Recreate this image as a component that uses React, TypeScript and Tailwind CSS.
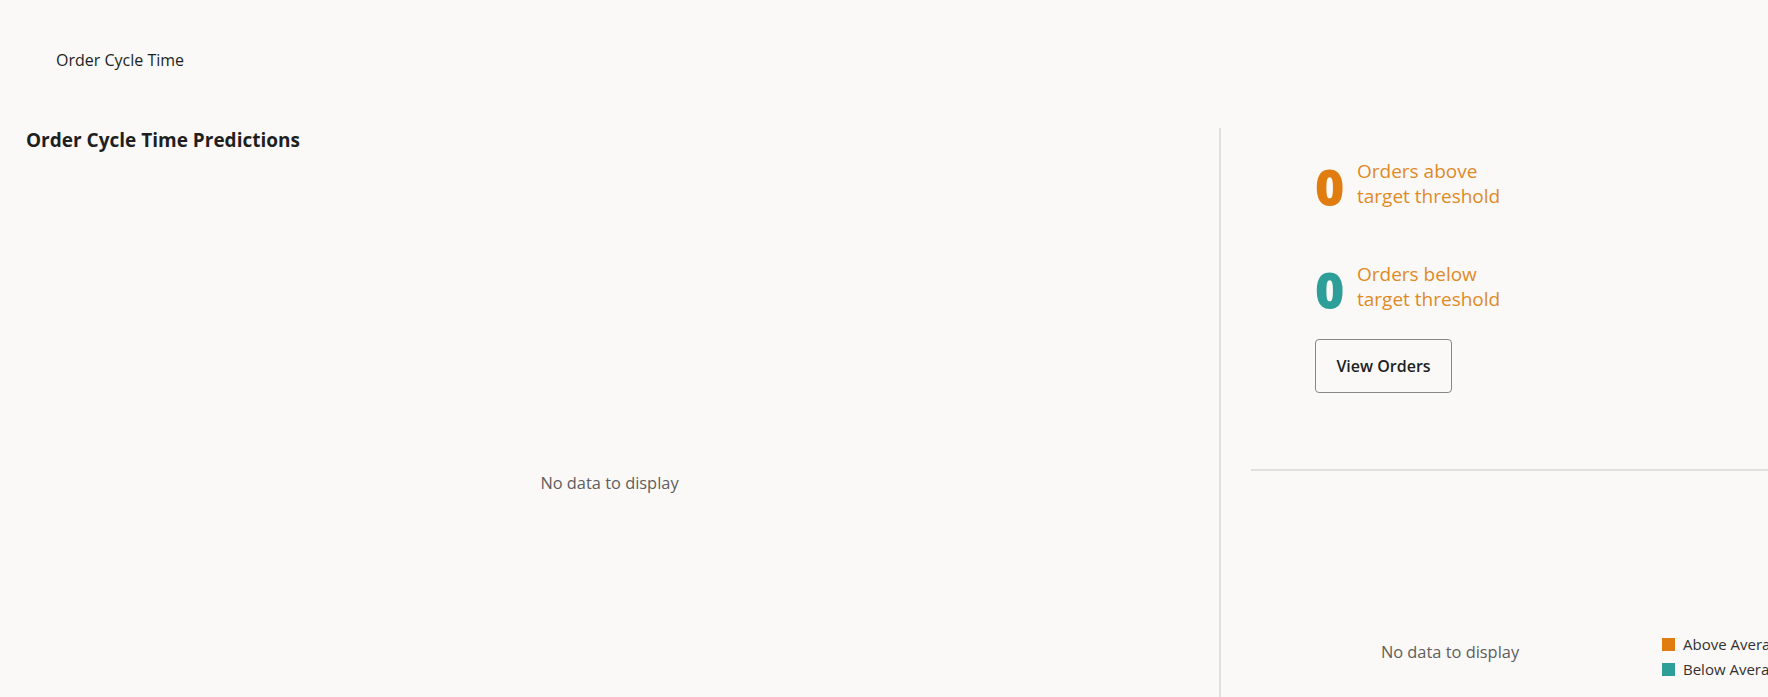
import React from "react";

export default function App() {
  const font = { fontFamily: '"Open Sans", "Noto Sans", sans-serif' };
  return (
    <div className="w-full h-[697px] bg-[#faf9f8] overflow-hidden text-[#201f1e]" style={font}>
      <div className="h-[128px] pl-[56px] pt-[49px]">
        <div className="text-[16px] leading-[22px]">Order Cycle Time</div>
      </div>
      <div className="flex h-[569px]">
        <div className="w-[1219px] shrink-0 flex flex-col">
          <div className="pl-[26px] text-[19px] font-bold leading-[24px] text-[#201f1e]">Order Cycle Time Predictions</div>
          <div className="flex justify-center pt-[319px] text-[16.4px] text-[#605e5c]">No data to display</div>
        </div>
        <div className="w-[2px] bg-[#e1dfdd] shrink-0" />
        <div className="flex-1 flex flex-col min-w-0">
          <div className="pl-[94px] pt-[34px]">
            <div className="flex items-start gap-[12px]">
              <div className="w-[30px] text-[50px] font-black leading-[50px] text-[#e07c10]">0</div>
              <div className="-mt-[3px] text-[19px] leading-[25px] text-[#e08a26]">Orders above<br />target threshold</div>
            </div>
            <div className="flex items-start gap-[12px] mt-[53px]">
              <div className="w-[30px] text-[50px] font-black leading-[50px] text-[#2e9e99]">0</div>
              <div className="-mt-[3px] text-[19px] leading-[25px] text-[#e08a26]">Orders below<br />target threshold</div>
            </div>
            <button className="mt-[24px] w-[137px] h-[54px] border border-[#8a8886] rounded-[4px] text-[16px] font-semibold text-[#201f1e] bg-transparent">View Orders</button>
          </div>
          <div className="ml-[30px] mt-[76px] h-[2px] bg-[#e1dfdd]" />
          <div className="flex items-end flex-1 pb-[21px]">
            <div className="w-[441px] shrink-0 pl-[17px] mb-[11px] flex justify-center text-[16.4px] text-[#605e5c]">No data to display</div>
            <div className="flex flex-col gap-[12px] text-[15px] leading-[13px] whitespace-nowrap text-[#323130]">
              <div className="flex items-center gap-[8px]"><span className="w-[13px] h-[13px] bg-[#e07c10] inline-block shrink-0" />Above Average</div>
              <div className="flex items-center gap-[8px]"><span className="w-[13px] h-[13px] bg-[#2e9e99] inline-block shrink-0" />Below Average</div>
            </div>
          </div>
        </div>
      </div>
    </div>
  );
}
